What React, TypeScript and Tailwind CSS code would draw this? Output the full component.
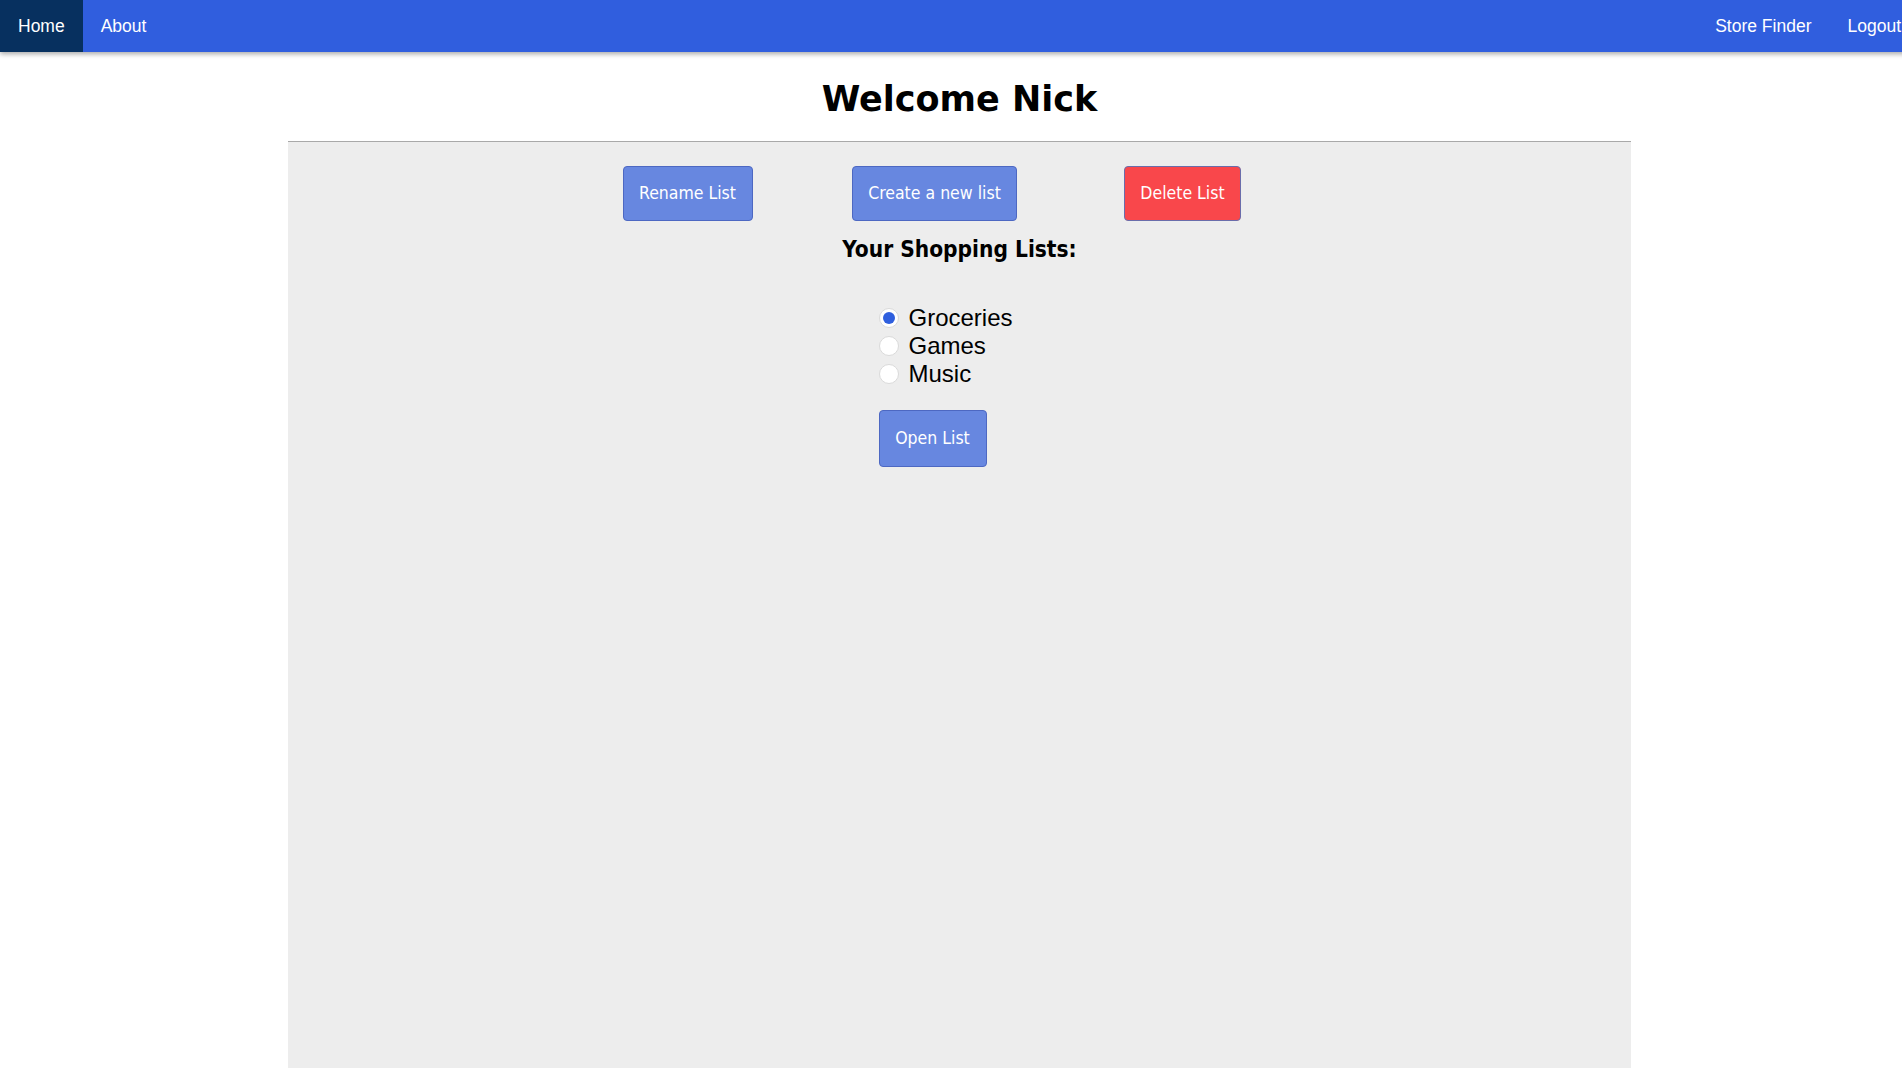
import { useState } from "react";

const navFont = { fontFamily: '"Liberation Sans", Arial, sans-serif' };
const titleFont = { fontFamily: '"DejaVu Sans", Verdana, sans-serif' };
const uiFont = { fontFamily: '"DejaVu Sans Condensed", "DejaVu Sans", Tahoma, sans-serif' };

const lists = ["Groceries", "Games", "Music"];

function NavItem({ label, active }: { label: string; active?: boolean }) {
  return (
    <a
      href="#"
      className={
        active
          ? "flex h-full items-center bg-[#07305f] px-[18px] text-[17.5px] text-white"
          : "flex h-full items-center px-[18px] text-[17.5px] text-white"
      }
      style={navFont}
    >
      {label}
    </a>
  );
}

function ActionButton({
  label,
  className,
}: {
  label: string;
  className: string;
}) {
  return (
    <button
      type="button"
      className={`flex h-[55px] items-center justify-center rounded-[4px] border text-[17.5px] text-white ${className}`}
      style={uiFont}
    >
      {label}
    </button>
  );
}

export default function App() {
  const [selected, setSelected] = useState("Groceries");

  return (
    <div className="h-screen w-full overflow-hidden bg-white">
      <div className="flex h-full w-[1919px] flex-col">
        {/* Top navigation bar */}
        <nav className="relative z-10 flex h-[52px] shrink-0 items-center justify-between bg-[#305ede] shadow-[0_2px_5px_rgba(0,0,0,0.35)]">
          <div className="flex h-full">
            <NavItem label="Home" active />
            <NavItem label="About" />
          </div>
          <div className="flex h-full">
            <NavItem label="Store Finder" />
            <NavItem label="Logout" />
          </div>
        </nav>

        <h1
          className="mb-[21px] mt-[27px] text-center text-[35px] font-bold leading-[41px] text-black"
          style={titleFont}
        >
          Welcome Nick
        </h1>

        {/* Shopping lists panel */}
        <main className="mx-auto flex w-[1343px] flex-1 flex-col border-t border-[#a9a9a9] bg-[#ededed]">
          <div className="mt-[24px] flex justify-center pr-[50px]">
            <div className="flex w-[247px] justify-center">
              <ActionButton
                label="Rename List"
                className="w-[130px] border-[#4d68c2] bg-[#6787e0]"
              />
            </div>
            <div className="flex w-[247px] justify-center">
              <ActionButton
                label="Create a new list"
                className="w-[165px] border-[#4d68c2] bg-[#6787e0]"
              />
            </div>
            <div className="flex w-[247px] justify-center pl-[2px]">
              <ActionButton
                label="Delete List"
                className="w-[117px] border-[#6a6dab] bg-[#f9474b]"
              />
            </div>
          </div>

          <h3
            className="mt-[16px] text-center text-[22.5px] font-bold leading-[25px] text-black"
            style={uiFont}
          >
            Your Shopping Lists:
          </h3>

          <div className="mt-[42px] flex justify-center pr-[52px]">
            <div className="flex w-[110px] flex-col">
              <div className="flex flex-col whitespace-nowrap">
                {lists.map((name) => (
                  <label
                    key={name}
                    className="flex h-[28px] cursor-pointer items-center gap-[10px] text-[24px] text-black"
                    style={navFont}
                  >
                    <input
                      type="radio"
                      name="list"
                      className="sr-only"
                      checked={selected === name}
                      onChange={() => setSelected(name)}
                    />
                    <span className="flex h-[20px] w-[20px] shrink-0 items-center justify-center rounded-full border border-[#dadada] bg-white">
                      {selected === name && (
                        <span className="h-[12px] w-[12px] rounded-full bg-[#2f5fde]" />
                      )}
                    </span>
                    <span className="leading-[28px]">{name}</span>
                  </label>
                ))}
              </div>
              <button
                type="button"
                className="mt-[22px] flex h-[57px] w-[108px] items-center justify-center rounded-[4px] border border-[#4d68c2] bg-[#6787e0] text-[17.5px] text-white"
                style={uiFont}
              >
                Open List
              </button>
            </div>
          </div>
        </main>
      </div>
    </div>
  );
}
